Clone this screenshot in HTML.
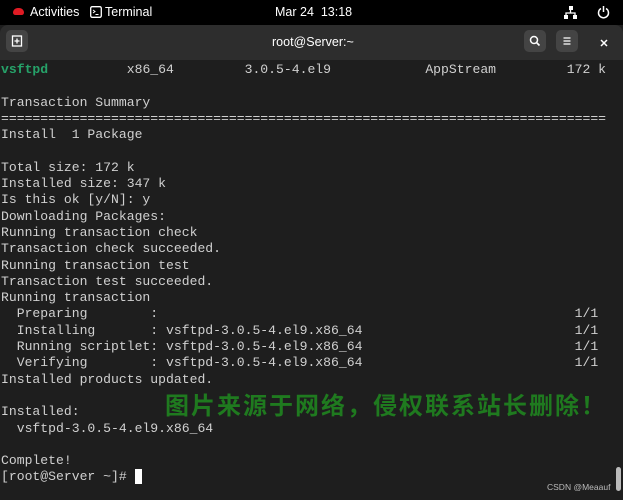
<!DOCTYPE html>
<html><head><style>
body{margin:0;width:623px;height:500px;background:#1e1e1e;overflow:hidden;position:relative;font-family:"Liberation Sans",sans-serif}
.top{position:absolute;left:0;top:0;width:623px;height:25px;background:#000;color:#fff;font-size:12.5px}
.top span{position:absolute;top:5px}
.tb{position:absolute;left:0;top:25px;width:623px;height:35px;background:#2d2d2d;border-radius:8px 8px 0 0;color:#fff;font-size:12.5px}
.btn{position:absolute;top:5px;width:22px;height:22px;background:#444;border-radius:5px}
pre{position:absolute;left:1px;top:62px;margin:0;font-family:"Liberation Mono",monospace;font-size:13.1px;line-height:16.3px;color:#d0d0d0}
.g{color:#26a269;font-weight:bold}
.wm{position:absolute;left:165px;top:389px;font-family:"Noto Sans CJK SC",sans-serif;font-weight:bold;font-size:24px;line-height:30px;color:#1f7a1f;letter-spacing:2px;white-space:nowrap}
.csdn{position:absolute;left:547px;top:482px;font-size:8.5px;color:#bbb}
.sb{position:absolute;left:616px;top:467px;width:5px;height:24px;background:#bbb;border-radius:3px}
</style></head><body>
<div class="top">
<span style="left:13px;top:8px;width:11px;height:7px;background:#e01b24;border-radius:6px 6px 3px 3px"></span>
<span style="left:30px">Activities</span>
<svg style="position:absolute;left:90px;top:6px" width="12" height="12" viewBox="0 0 12 12"><rect x="0.7" y="0.7" width="10.6" height="10.6" rx="1.5" fill="none" stroke="#fff" stroke-width="1.3"/><path d="M3 4l2 1.5L3 7M5.5 8.5h3" stroke="#fff" stroke-width="1" fill="none"/></svg>
<span style="left:105px">Terminal</span>
<span style="left:275px">Mar 24&nbsp; 13:18</span>
<svg style="position:absolute;left:564px;top:6px" width="13" height="13" viewBox="0 0 13 13" fill="#fff"><rect x="5" y="0" width="4" height="4"/><rect x="0" y="9" width="4" height="4"/><rect x="9" y="9" width="4" height="4"/><path d="M6.5 4v3M2 9V7h9v2" stroke="#fff" fill="none" stroke-width="1.3"/></svg>
<svg style="position:absolute;left:597px;top:5px" width="13" height="14" viewBox="0 0 13 14"><path d="M4 3.5A5 5 0 1 0 9 3.5M6.5 1v6" stroke="#fff" stroke-width="1.5" fill="none"/></svg>
</div>
<div class="tb">
<div class="btn" style="left:6px"><svg width="22" height="22" viewBox="0 0 22 22"><rect x="6.5" y="6" width="9" height="10" fill="none" stroke="#fff" stroke-width="1.3"/><path d="M11 8.5v5M8.5 11h5" stroke="#fff" stroke-width="1.3"/></svg></div>
<span style="position:absolute;left:272px;top:10px">root@Server:~</span>
<div class="btn" style="left:524px"><svg width="22" height="22" viewBox="0 0 22 22"><circle cx="10" cy="10" r="3.5" fill="none" stroke="#fff" stroke-width="1.5"/><path d="M12.5 12.5l3 3" stroke="#fff" stroke-width="1.6"/></svg></div>
<div class="btn" style="left:556px"><svg width="22" height="22" viewBox="0 0 22 22"><path d="M7.5 8h7M7.5 11h7M7.5 14h7" stroke="#fff" stroke-width="1.3"/></svg></div>
<svg style="position:absolute;left:599px;top:13px" width="10" height="10" viewBox="0 0 10 10"><path d="M2 2l6 6M8 2l-6 6" stroke="#fff" stroke-width="1.5"/></svg>
</div>
<pre><span class="g">vsftpd</span>          x86_64         3.0.5-4.el9            AppStream         172 k

Transaction Summary
=============================================================================
Install  1 Package

Total size: 172 k
Installed size: 347 k
Is this ok [y/N]: y
Downloading Packages:
Running transaction check
Transaction check succeeded.
Running transaction test
Transaction test succeeded.
Running transaction
  Preparing        :                                                     1/1
  Installing       : vsftpd-3.0.5-4.el9.x86_64                           1/1
  Running scriptlet: vsftpd-3.0.5-4.el9.x86_64                           1/1
  Verifying        : vsftpd-3.0.5-4.el9.x86_64                           1/1
Installed products updated.

Installed:
  vsftpd-3.0.5-4.el9.x86_64

Complete!
[root@Server ~]# <span style="background:#fff">&nbsp;</span></pre>
<div class="wm">图片来源于网络，侵权联系站长删除！</div>
<div class="csdn">CSDN @Meaauf</div>
<div class="sb"></div>
</body></html>
